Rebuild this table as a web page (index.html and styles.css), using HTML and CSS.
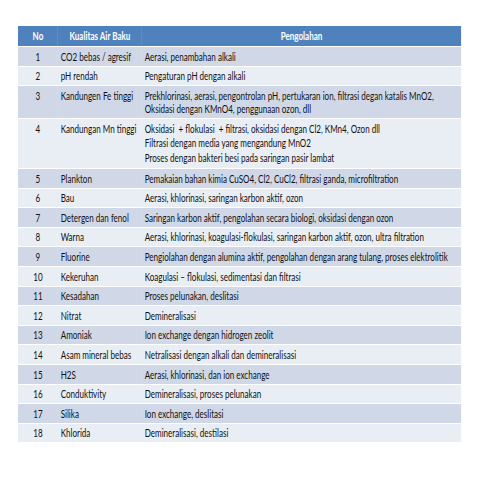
FILE: index.html
```html
<!DOCTYPE html>
<html lang="id">
<head>
<meta charset="utf-8">
<title>Kualitas Air Baku</title>
<link rel="stylesheet" href="styles.css">
</head>
<body>
<div class="page">
  <div class="squeeze">
    <table class="tbl">
      <colgroup>
        <col class="c-no">
        <col class="c-kual">
        <col class="c-peng">
      </colgroup>
      <thead>
        <tr><th>No</th><th>Kualitas Air Baku</th><th>Pengolahan</th></tr>
      </thead>
      <tbody>
        <tr><td>1</td><td>CO2 bebas / agresif</td><td>Aerasi, penambahan alkali</td></tr>
        <tr><td>2</td><td>pH rendah</td><td>Pengaturan pH dengan alkali</td></tr>
        <tr><td>3</td><td>Kandungen Fe tinggi</td><td>Prekhlorinasi, aerasi, pengontrolan pH, pertukaran ion, filtrasi degan katalis MnO2,<br>Oksidasi dengan KMnO4, penggunaan ozon, dll</td></tr>
        <tr class="tall"><td>4</td><td>Kandungan Mn tinggi</td><td>Oksidasi&nbsp; + flokulasi&nbsp; + filtrasi, oksidasi dengan Cl2, KMn4, Ozon dll<br>Filtrasi dengan media yang mengandung MnO2<br>Proses dengan bakteri besi pada saringan pasir lambat</td></tr>
        <tr><td>5</td><td>Plankton</td><td>Pemakaian bahan kimia CuSO4, Cl2, CuCl2, filtrasi ganda, microfiltration</td></tr>
        <tr><td>6</td><td>Bau</td><td>Aerasi, khlorinasi, saringan karbon aktif, ozon</td></tr>
        <tr><td>7</td><td>Detergen dan fenol</td><td>Saringan karbon aktif, pengolahan secara biologi, oksidasi dengan ozon</td></tr>
        <tr><td>8</td><td>Warna</td><td>Aerasi, khlorinasi, koagulasi-flokulasi, saringan karbon aktif, ozon, ultra filtration</td></tr>
        <tr><td>9</td><td>Fluorine</td><td>Pengiolahan dengan alumina aktif, pengolahan dengan arang tulang, proses elektrolitik</td></tr>
        <tr><td>10</td><td>Kekeruhan</td><td>Koagulasi – flokulasi, sedimentasi dan filtrasi</td></tr>
        <tr><td>11</td><td>Kesadahan</td><td>Proses pelunakan, deslitasi</td></tr>
        <tr><td>12</td><td>Nitrat</td><td>Demineralisasi</td></tr>
        <tr><td>13</td><td>Amoniak</td><td>Ion exchange dengan hidrogen zeolit</td></tr>
        <tr><td>14</td><td>Asam mineral bebas</td><td>Netralisasi dengan alkali dan demineralisasi</td></tr>
        <tr><td>15</td><td>H2S</td><td>Aerasi, khlorinasi, dan ion exchange</td></tr>
        <tr><td>16</td><td>Conduktivity</td><td>Demineralisasi, proses pelunakan</td></tr>
        <tr><td>17</td><td>Silika</td><td>Ion exchange, deslitasi</td></tr>
        <tr><td>18</td><td>Khlorida</td><td>Demineralisasi, destilasi</td></tr>
      </tbody>
    </table>
  </div>
</div>
</body>
</html>
```

FILE: styles.css
```css
html, body {
  margin: 0;
  padding: 0;
  background: #ffffff;
  overflow: hidden;
}

.page {
  width: 480px;
  height: 480px;
  padding: 26px 0 0 18px;
  box-sizing: border-box;
}

/* the source slide is horizontally compressed; reproduce with a scaleX */
.squeeze {
  width: 633px;
  transform: scaleX(0.7);
  transform-origin: 0 0;
}

.tbl {
  width: 633px;
  border-collapse: collapse;
  table-layout: fixed;
  font-family: Lato, "Open Sans", "Liberation Sans", sans-serif;
  font-size: 11.5px;
  color: #111111;
}

.c-no { width: 57px; }
.c-kual { width: 120px; }
.c-peng { width: 456px; }

.tbl th {
  background: #4f81bd;
  color: #ffffff;
  font-weight: bold;
  text-align: center;
  height: 20px;
  padding: 0;
  line-height: 20px;
  border-bottom: 1px solid #ffffff;
  box-sizing: border-box;
}

.tbl td {
  padding: 2.5px 0 2.5px 4px;
  line-height: 13.6px;
  vertical-align: top;
  text-align: left;
  border-bottom: 1px solid #ffffff;
  white-space: nowrap;
}

.tbl td:first-child {
  text-align: center;
  padding-left: 0;
}

.tbl tbody tr:nth-child(odd) td { background: #d0d8e8; }
.tbl tbody tr:nth-child(even) td { background: #e9edf4; }

.tbl tr.tall td {
  line-height: 14.4px;
  padding-top: 2.5px;
  padding-bottom: 3px;
}
```
